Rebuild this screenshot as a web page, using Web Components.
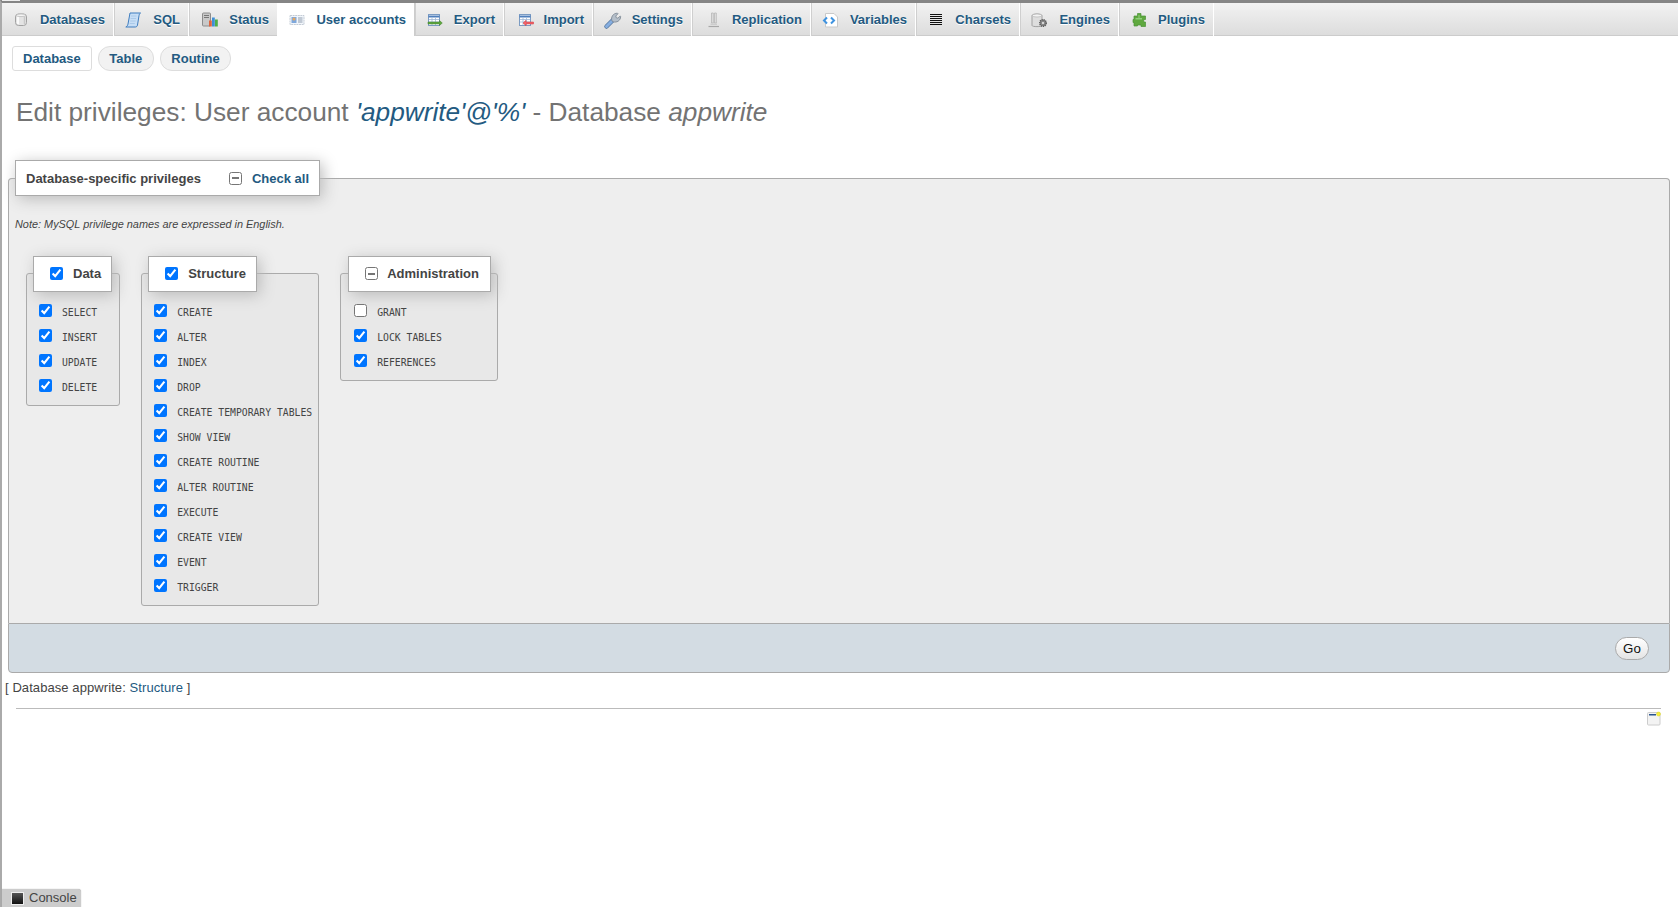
<!DOCTYPE html>
<html>
<head>
<meta charset="utf-8">
<title>phpMyAdmin</title>
<style>
    html, body { margin: 0; height: 100%; background: #fff; }
    body {
        font: 13px "Liberation Sans", Arial, sans-serif;
        color: #444;
        overflow: hidden;
    }
</style>
</head>
<body>
<pma-page>
    <pma-topnav></pma-topnav>
    <pma-subnav></pma-subnav>
    <pma-heading></pma-heading>
    <pma-privileges>
        <priv-group title="Data" state="checked" items="SELECT,INSERT,UPDATE,DELETE"></priv-group>
        <priv-group title="Structure" state="checked" items="CREATE,ALTER,INDEX,DROP,CREATE TEMPORARY TABLES,SHOW VIEW,CREATE ROUTINE,ALTER ROUTINE,EXECUTE,CREATE VIEW,EVENT,TRIGGER"></priv-group>
        <priv-group title="Administration" state="mixed" items="!GRANT,LOCK TABLES,REFERENCES"></priv-group>
    </pma-privileges>
    <pma-footer></pma-footer>
</pma-page>

<script>
// --- Icons (16x16 box, drawn to match the pmahomme sprites) ---
const TABLE = `<rect x="1.5" y="2.5" width="11" height="11" fill="#fff" stroke="#7b9bc2"/><path d="M1.5 4.5h11" stroke="#4f7fbc" stroke-width="2"/><path d="M2 7.5h10M2 10h10M5 6v7M8.5 6v7" stroke="#9fb8d6" stroke-width=".8"/>`;
const ICONS = {
    databases: `<rect x="3.5" y="2" width="11" height="11.5" rx="3" fill="#e4e4e4" stroke="#a2a2a2"/><path d="M6 4.5V12" stroke="#fafafa" stroke-width="2"/><path d="M12.5 4.5V12" stroke="#c8c8c8" stroke-width="1.5"/><ellipse cx="9" cy="3.3" rx="4.5" ry="1.3" fill="#f5f5f5" stroke="#b5b5b5" stroke-width=".7"/>`,
    sql: `<path d="M5 1h10.5c-1 .6-1.3 1.6-1.5 2.7L12.5 13c-.2 1.3-1 2-2.2 2H.8C2.2 14.3 2.7 13.3 3 12z" fill="#c7def6" stroke="#3f7dbf"/><path d="M6 4h5.500M5.600 6.500h5.500M5.200 9h5.500M4.800 11.500h5" stroke="#a2c4e6" stroke-width=".8"/>`,
    status: `<rect x="1.5" y="1" width="8" height="13" rx="1" fill="#c9c9c9" stroke="#8c8c8c"/><path d="M3 3.5h5M3 5.5h5" stroke="#777"/><rect x="8" y="8.5" width="2.8" height="6" fill="#e0653f"/><rect x="11" y="5.5" width="2.8" height="9" fill="#3f8fd6"/><rect x="14" y="7.5" width="2.8" height="7" fill="#4fae4a"/>`,
    users: `<g transform="translate(1.5 0)"><rect x=".5" y="3.5" width="14" height="9" fill="#f2f6fb" stroke="#c4ccd6" stroke-dasharray="2 .6"/><rect x="2" y="5" width="5" height="6" fill="#7fa8dc"/><circle cx="4.5" cy="7" r="1.5" fill="#e8a860"/><path d="M8.5 6H13M8.5 8H13M8.5 10H13" stroke="#8f9cad"/></g>`,
    exporticon: `<g transform="translate(1 0)">${TABLE}<path d="M1 10h11.500V8.500l2.800 2.500-2.800 2.500V12H1z" fill="#5fa83f" stroke="#3f7f2a" stroke-width=".5"/></g>`,
    importicon: `<g transform="translate(2 0)">${TABLE}<path d="M15.500 10H8V8.300L5 11l3 2.700V12h7.500z" fill="#f2646a" stroke="#cf3a40" stroke-width=".5"/></g>`,
    settings: `<path d="M2.5 14.5L9 8" stroke="#55779f" stroke-width="4.5" stroke-linecap="round"/><path d="M2.5 14.5L9 8" stroke="#86aee0" stroke-width="3" stroke-linecap="round"/><path d="M8 9c-1.500-3.500 1-8 5.500-7.800l.5.500-2.200 2.300.4 1.700 1.700.5 2.300-2.200.4.500c.2 4-4 6.500-7.500 5.300z" fill="#b5bfca" stroke="#76818e" stroke-width=".8"/>`,
    replication: `<path d="M7.5 1v10h1.800V1zM10.500 1v10h1.800V1z" fill="#e2e2e2" stroke="#b0b0b0" stroke-width=".7"/><path d="M6.500 11.500H13V13H6.500z" fill="#cdcdcd"/><path d="M4.500 14.500H15" stroke="#a8a8a8" stroke-width="1.2"/>`,
    variables: `<path d="M3.5 1.5H12L15.500 5v10h-12z" fill="#fff" stroke="#c9c9c9"/><path d="M5 5.500L2 8.500l3 3M9 5.500l3 3-3 3" fill="none" stroke="#3f93e0" stroke-width="2"/>`,
    charsets: `<path d="M3 2.500h12M3 4.500h12M3 6.500h12M3 8.500h12M3 10.500h12M3 12.500h12" stroke="#111"/>`,
    engines: `<g transform="translate(1 0)"><path d="M0 3.500C0 1.500 10 1.500 10 3.500v10C10 15 0 15 0 13.500z" fill="#dedede" stroke="#a0a0a0"/><ellipse cx="5" cy="3.5" rx="4.5" ry="1.5" fill="#f3f3f3" stroke="#aaa" stroke-width=".6"/><circle cx="11" cy="11" r="3.2" fill="#8a8a8a" stroke="#5d5d5d" stroke-dasharray="1.200 .7" stroke-width="1.6"/><circle cx="11" cy="11" r="1" fill="#eee"/></g>`,
    plugins: `<g transform="translate(2.5 0)"><path d="M5 1.500h3.500V4H13v3.500h-1.800V10H13v4.500H8.500V13H5v1H1.500v-3.500h-1v-3h1V4H5z" fill="#5fa83f" stroke="#4b9436" stroke-width=".7"/><path d="M6 3h1v3h2.500v1.500H3V6h3z" fill="#8fd07a"/></g>`
};

const TABS = [
    ['Databases', 'databases', 112], ['SQL', 'sql', 75], ['Status', 'status', 89],
    ['User accounts', 'users', 137], ['Export', 'exporticon', 89], ['Import', 'importicon', 89],
    ['Settings', 'settings', 99], ['Replication', 'replication', 119], ['Variables', 'variables', 105],
    ['Charsets', 'charsets', 104], ['Engines', 'engines', 99], ['Plugins', 'plugins', 95]
];

// --- Web Components ---

class PmaPage extends HTMLElement {
    constructor() {
        super();
        this.attachShadow({ mode: 'open' });
        this.shadowRoot.innerHTML = `
            <style>
                :host {
                    display: block;
                    box-sizing: border-box;
                    height: 907px;
                    border-left: 2px solid #aaa;
                    border-top: 3px solid #858585;
                    position: relative;
                }
                .notch {
                    position: absolute;
                    left: 0;
                    top: -3px;
                    width: 18px;
                    height: 1px;
                    background: #eee;
                }
            </style>
            <span class="notch"></span>
            <slot></slot>
            <pma-console></pma-console>
        `;
    }
}

class PmaTopnav extends HTMLElement {
    constructor() {
        super();
        this.attachShadow({ mode: 'open' });
        const tabs = TABS.map(([label, icon, w]) => `
            <a class="${label === 'User accounts' ? 'active' : ''}" style="width:${w}px">
                <svg width="16" height="16" viewBox="0 0 16 16">${ICONS[icon]}</svg>
                <span>${label}</span>
            </a>`).join('');
        this.shadowRoot.innerHTML = `
            <style>
                :host {
                    display: block;
                    height: 33px;
                    background: linear-gradient(#f2f2f2, #dcdcdc);
                    box-shadow: 0 -1px 0 #ccc inset;
                }
                nav { display: flex; height: 33px; }
                a {
                    box-sizing: border-box;
                    display: flex;
                    align-items: center;
                    justify-content: flex-end;
                    gap: 12px;
                    padding-right: 8px;
                    border-right: 1px solid #fff;
                    box-shadow: 1px 0 0 #cfcfcf inset;
                    font-weight: bold;
                    font-size: 13px;
                    color: #235a81;
                    text-shadow: 0 1px 0 #fff;
                }
                a:first-child { box-shadow: none; }
                a.active {
                    background: #fff;
                    border-right: 1px solid #ccc;
                    box-shadow: none;
                }
                svg { flex: none; overflow: visible; }
            </style>
            <nav>${tabs}</nav>
        `;
    }
}

class PmaSubnav extends HTMLElement {
    constructor() {
        super();
        this.attachShadow({ mode: 'open' });
        this.shadowRoot.innerHTML = `
            <style>
                :host {
                    display: flex;
                    gap: 6px;
                    padding: 10px 0 0 10px;
                }
                a {
                    box-sizing: border-box;
                    height: 25px;
                    line-height: 23px;
                    padding: 0 10.5px;
                    border: 1px solid #ddd;
                    border-radius: 12px;
                    background: #f2f2f2;
                    font-weight: bold;
                    color: #235a81;
                }
                a.active { background: #fff; border-radius: 3px; padding: 0 10px; }
            </style>
            <a class="active">Database</a><a>Table</a><a>Routine</a>
        `;
    }
}

class PmaHeading extends HTMLElement {
    constructor() {
        super();
        this.attachShadow({ mode: 'open' });
        this.shadowRoot.innerHTML = `
            <style>
                :host {
                    display: block;
                    padding: 26px 0 0 14px;
                    height: 63px;
                    font-size: 26.25px;
                    line-height: 30px;
                    color: #737373;
                }
                i { color: #235a81; }
                i.plain { color: #737373; }
            </style>
            Edit privileges: User account <i>'appwrite'@'%'</i> - Database <i class="plain">appwrite</i>
        `;
    }
}

class PmaPrivileges extends HTMLElement {
    constructor() {
        super();
        this.attachShadow({ mode: 'open' });
        this.shadowRoot.innerHTML = `
            <style>
                :host { display: block; margin: 0 8px 0 6px; }
                fieldset {
                    margin: 0;
                    min-width: 0;
                    padding: 0 6px;
                    height: 463px;
                    box-sizing: border-box;
                    border: 1px solid #aaa;
                    border-bottom: 0;
                    border-radius: 4px 4px 0 0;
                    background: #eee;
                }
                legend {
                    display: flex;
                    align-items: center;
                    box-sizing: border-box;
                    width: 305px;
                    height: 36px;
                    padding: 0 10px;
                    background: #fff;
                    border: 1px solid #aaa;
                    box-shadow: 3px 3px 15px #bbb;
                    font-weight: bold;
                    color: #444;
                }
                .all {
                    display: flex;
                    align-items: center;
                    gap: 10px;
                    margin-left: auto;
                    color: #235a81;
                }
                p {
                    margin: 21.5px 0 0;
                    font-size: 10.9px;
                    line-height: 12px;
                    font-style: italic;
                    color: #444;
                }
                .groups {
                    display: flex;
                    align-items: flex-start;
                    gap: 21px;
                    padding: 26px 0 0 11px;
                }
            </style>
            <fieldset>
                <legend>
                    Database-specific privileges
                    <span class="all"><mixed-box></mixed-box>Check all</span>
                </legend>
                <p>Note: MySQL privilege names are expressed in English.</p>
                <div class="groups"><slot></slot></div>
            </fieldset>
        `;
    }
}

class MixedBox extends HTMLElement {
    constructor() {
        super();
        this.attachShadow({ mode: 'open' });
        this.shadowRoot.innerHTML = `
            <style>
                :host {
                    display: inline-flex;
                    align-items: center;
                    justify-content: center;
                    box-sizing: border-box;
                    width: 13px;
                    height: 13px;
                    background: #fff;
                    border: 1px solid #767676;
                    border-radius: 2.5px;
                    flex: none;
                }
                span { width: 7px; height: 2px; background: #767676; }
            </style>
            <span></span>
        `;
    }
}

class PrivGroup extends HTMLElement {
    constructor() {
        super();
        this.attachShadow({ mode: 'open' });
    }

    connectedCallback() {
        const title = this.getAttribute('title');
        const mixed = this.getAttribute('state') === 'mixed';
        const items = this.getAttribute('items').split(',');
        // a leading ! marks a privilege that is not granted
        const rows = items.map(item => {
            const off = item.startsWith('!');
            return `<label><input type="checkbox" ${off ? '' : 'checked'}><code>${item.replace('!', '')}</code></label>`;
        }).join('');
        this.shadowRoot.innerHTML = `
            <style>
                :host { display: block; }
                fieldset {
                    margin: 0;
                    padding: 0 6px 5px 6px;
                    border: 1px solid #aaa;
                    border-radius: 3px;
                    background: #e8e8e8;
                }
                :host([state="mixed"]) fieldset { padding-left: 7px; }
                legend {
                    display: flex;
                    align-items: center;
                    gap: 10px;
                    box-sizing: border-box;
                    height: 36px;
                    margin-right: 1px;
                    padding: 0 10px 0 16px;
                    background: #fff;
                    border: 1px solid #aaa;
                    box-shadow: 3px 3px 15px #bbb;
                    font-weight: bold;
                    color: #444;
                }
                :host([state="mixed"]) legend { gap: 9px; margin-right: 0; padding-right: 11px; }
                legend input { margin: 0; }
                label { display: flex; height: 25px; }
                .rows { padding: 8px 0 0 6px; }
                input { width: 13px; height: 13px; margin: 4px 10px 0 0; flex: none; }
                code {
                    font: 9.75px/25px "DejaVu Sans Mono", monospace;
                    color: #444;
                    white-space: pre;
                }
            </style>
            <fieldset>
                <legend>${mixed ? '<mixed-box></mixed-box>' : '<input type="checkbox" checked>'}${title}</legend>
                <div class="rows">${rows}</div>
            </fieldset>
        `;
    }
}

class PmaFooter extends HTMLElement {
    constructor() {
        super();
        this.attachShadow({ mode: 'open' });
        this.shadowRoot.innerHTML = `
            <style>
                :host { display: block; }
                .bar {
                    box-sizing: border-box;
                    height: 50px;
                    margin: 0 8px 0 6px;
                    display: flex;
                    justify-content: flex-end;
                    align-items: center;
                    padding-right: 20px;
                    background: #d3dce3;
                    border: 1px solid #aaa;
                    border-radius: 0 0 4px 4px;
                }
                button {
                    box-sizing: border-box;
                    width: 34px;
                    height: 23px;
                    padding: 0;
                    font: 13.33px "Liberation Sans", Arial, sans-serif;
                    color: #111;
                    border: 1px solid #aaa;
                    border-radius: 12px;
                    background: linear-gradient(#fff, #e4e4e4);
                }
                .crumb {
                    padding: 7px 0 0 3px;
                    height: 21px;
                    line-height: 15px;
                    letter-spacing: .08px;
                    color: #235a81;
                }
                .crumb span { color: #444; }
                hr {
                    margin: 7px 17px 0 14px;
                    border: 0;
                    border-top: 1px solid #bbb;
                }
                .pad { display: flex; justify-content: flex-end; padding: 2px 17px 0 0; }
            </style>
            <div class="bar"><button>Go</button></div>
            <div class="crumb"><span>[ Database appwrite:</span> Structure <span>]</span></div>
            <hr>
            <div class="pad">
                <svg width="14" height="15" viewBox="0 0 14 15">
                    <rect x=".5" y="1.5" width="12.5" height="12.5" rx="1" fill="#f3f3f3" stroke="#ccc"/>
                    <rect x="2" y="3" width="7" height="1.5" fill="#2a5590"/>
                    <circle cx="11.5" cy="3" r="2" fill="#f5ee3c" stroke="#dcd42a" stroke-width=".5"/>
                </svg>
            </div>
        `;
    }
}

class PmaConsole extends HTMLElement {
    constructor() {
        super();
        this.attachShadow({ mode: 'open' });
        this.shadowRoot.innerHTML = `
            <style>
                :host {
                    position: absolute;
                    left: 0;
                    bottom: 0;
                    box-sizing: border-box;
                    width: 79px;
                    height: 18px;
                    display: flex;
                    align-items: center;
                    gap: 5px;
                    padding-left: 9px;
                    background: #ccc;
                    border-radius: 0 3px 0 0;
                    box-shadow: 0 0 1px #999;
                    color: #444;
                    line-height: 18px;
                }
                .ico {
                    box-sizing: border-box;
                    width: 13px;
                    height: 13px;
                    border: 1px solid #eee;
                    background: linear-gradient(#555, #111);
                }
            </style>
            <span class="ico"></span>Console
        `;
    }
}

customElements.define('pma-page', PmaPage);
customElements.define('pma-topnav', PmaTopnav);
customElements.define('pma-subnav', PmaSubnav);
customElements.define('pma-heading', PmaHeading);
customElements.define('pma-privileges', PmaPrivileges);
customElements.define('mixed-box', MixedBox);
customElements.define('priv-group', PrivGroup);
customElements.define('pma-footer', PmaFooter);
customElements.define('pma-console', PmaConsole);
</script>
</body>
</html>
